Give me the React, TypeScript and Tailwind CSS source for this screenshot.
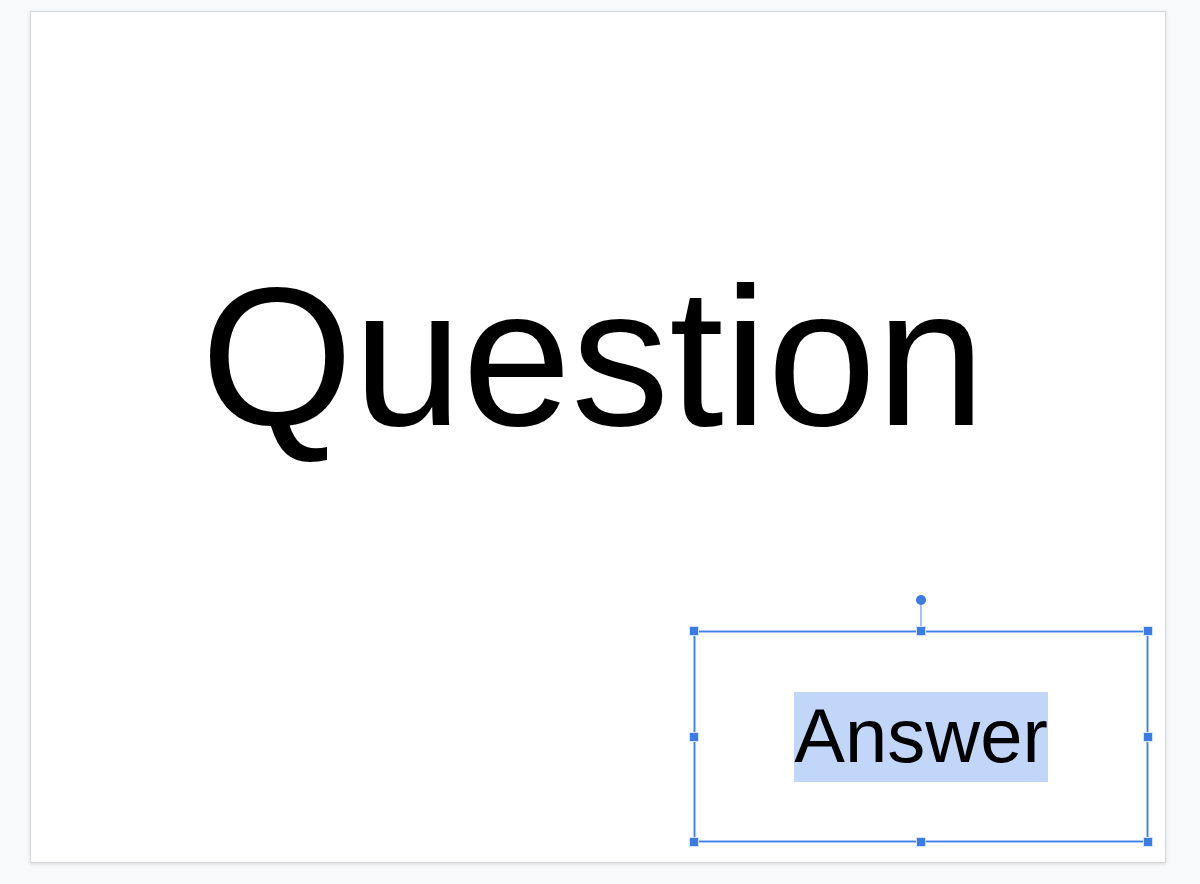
import React from "react";

const Handle = ({ className }: { className: string }) => (
  <div
    className={`absolute w-[10px] h-[10px] bg-[#3b7be6] border border-[#d6e4fb] ${className}`}
  />
);

export default function App() {
  return (
    <div className="w-[1200px] h-[884px] bg-[#f8f9fa] pl-[30px] pt-[11px] font-['Liberation_Sans',Arial,sans-serif] text-black">
      <div className="w-[1136px] h-[852px] bg-white border border-[#d5d7db] shadow-[0_1px_3px_rgba(60,64,67,0.18)] flex flex-col">
        <div className="pt-[231px] pr-[10px] text-center text-[196px] leading-[230px]">
          Question
        </div>
        <div className="relative ml-[663px] mt-[158px] w-[454px] h-[211px] border border-[#3f7fe8] ring-1 ring-[#a9c6f7] shadow-[inset_0_0_0_1px_#a9c6f7] flex items-center justify-center">
          <span className="inline-block bg-[#c2d6fa] text-[76px] leading-[88px] pb-[2px] whitespace-nowrap">
            Answer
          </span>
          {/* rotation handle */}
          <div className="absolute left-1/2 -translate-x-1/2 -top-[28px] w-px h-[28px] bg-[#4a86e8]" />
          <div className="absolute left-1/2 -translate-x-1/2 -top-[37px] w-[10px] h-[10px] rounded-full bg-[#3b7be6]" />
          {/* selection handles */}
          <Handle className="-left-[6px] -top-[6px]" />
          <Handle className="left-1/2 -translate-x-1/2 -top-[6px]" />
          <Handle className="-right-[6px] -top-[6px]" />
          <Handle className="-left-[6px] top-1/2 -translate-y-1/2" />
          <Handle className="-right-[6px] top-1/2 -translate-y-1/2" />
          <Handle className="-left-[6px] -bottom-[6px]" />
          <Handle className="left-1/2 -translate-x-1/2 -bottom-[6px]" />
          <Handle className="-right-[6px] -bottom-[6px]" />
        </div>
      </div>
    </div>
  );
}
